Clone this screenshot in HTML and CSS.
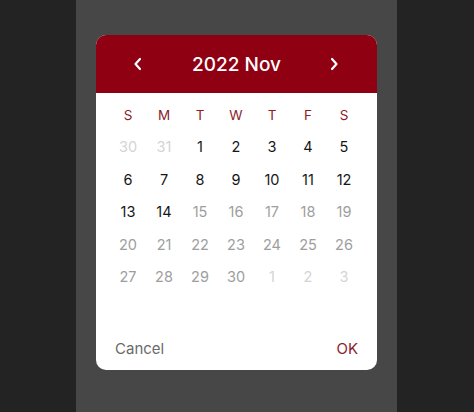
FILE: index.html
```html
<!DOCTYPE html>
<html lang="en">
<head>
<meta charset="utf-8">
<title>Date picker</title>
<link rel="stylesheet" href="styles.css">
</head>
<body>
<div class="stage">
  <div class="panel">
    <div class="picker">
      <div class="picker-head">
        <button class="nav" aria-label="Previous month">
          <svg width="10" height="14" viewBox="0 0 10 14"><path d="M7 2 L2.5 7 L7 12" fill="none" stroke="#fff" stroke-width="2.2" stroke-linecap="round" stroke-linejoin="round"/></svg>
        </button>
        <div class="title">2022 Nov</div>
        <button class="nav" aria-label="Next month">
          <svg width="10" height="14" viewBox="0 0 10 14"><path d="M3 2 L7.5 7 L3 12" fill="none" stroke="#fff" stroke-width="2.2" stroke-linecap="round" stroke-linejoin="round"/></svg>
        </button>
      </div>
      <div class="grid">
        <span class="wd">S</span><span class="wd">M</span><span class="wd">T</span><span class="wd">W</span><span class="wd">T</span><span class="wd">F</span><span class="wd">S</span>
        <span class="d other">30</span><span class="d other">31</span><span class="d">1</span><span class="d">2</span><span class="d">3</span><span class="d">4</span><span class="d">5</span>
        <span class="d">6</span><span class="d">7</span><span class="d">8</span><span class="d">9</span><span class="d">10</span><span class="d">11</span><span class="d">12</span>
        <span class="d">13</span><span class="d">14</span><span class="d later">15</span><span class="d later">16</span><span class="d later">17</span><span class="d later">18</span><span class="d later">19</span>
        <span class="d later">20</span><span class="d later">21</span><span class="d later">22</span><span class="d later">23</span><span class="d later">24</span><span class="d later">25</span><span class="d later">26</span>
        <span class="d later">27</span><span class="d later">28</span><span class="d later">29</span><span class="d later">30</span><span class="d other">1</span><span class="d other">2</span><span class="d other">3</span>
      </div>
      <div class="actions">
        <button class="btn cancel">Cancel</button>
        <button class="btn ok">OK</button>
      </div>
    </div>
  </div>
</div>
</body>
</html>
```
FILE: styles.css
```css
* { box-sizing: border-box; }
html, body {
  margin: 0;
  height: 100%;
}
body {
  background: #232323;
  font-family: Inter, "Noto Sans", "Liberation Sans", sans-serif;
}
.stage {
  display: flex;
  height: 412px;
  padding-left: 76px;
}
.panel {
  width: 321px;
  height: 100%;
  background: #474747;
  padding: 35px 20px 0 20px;
}
.picker {
  width: 281px;
  height: 335px;
  background: #fff;
  border-radius: 10px;
  overflow: hidden;
  display: flex;
  flex-direction: column;
}
.picker-head {
  height: 58px;
  background: #8f0013;
  display: flex;
  align-items: center;
  justify-content: space-between;
  padding: 0 36px 0 35px;
}
.nav {
  border: 0;
  background: none;
  padding: 0;
  width: 14px;
  height: 20px;
  display: flex;
  align-items: center;
  justify-content: center;
}
.title {
  color: #fff;
  font-size: 19px;
  font-weight: 500;
  margin-left: 1px;
}
.grid {
  display: grid;
  grid-template-columns: repeat(7, 36px);
  grid-auto-rows: 32.5px;
  padding: 5px 0 0 14px;
  align-items: center;
  justify-items: center;
}
.wd {
  font-size: 13.5px;
  color: #8c1c2b;
  height: 32px;
  line-height: 32px;
  margin-bottom: -2px;
}
.d {
  font-size: 14.5px;
  color: #161616;
}
.d.later { color: #9e9e9e; }
.d.other { color: #d4d4d4; }
.actions {
  margin-top: auto;
  display: flex;
  justify-content: space-between;
  padding: 0 19px 12px 19px;
}
.btn {
  border: 0;
  background: none;
  padding: 0;
  font-family: inherit;
  font-size: 15px;
}
.cancel { color: #6a6a6a; }
.ok { color: #8c1c2b; }
```
